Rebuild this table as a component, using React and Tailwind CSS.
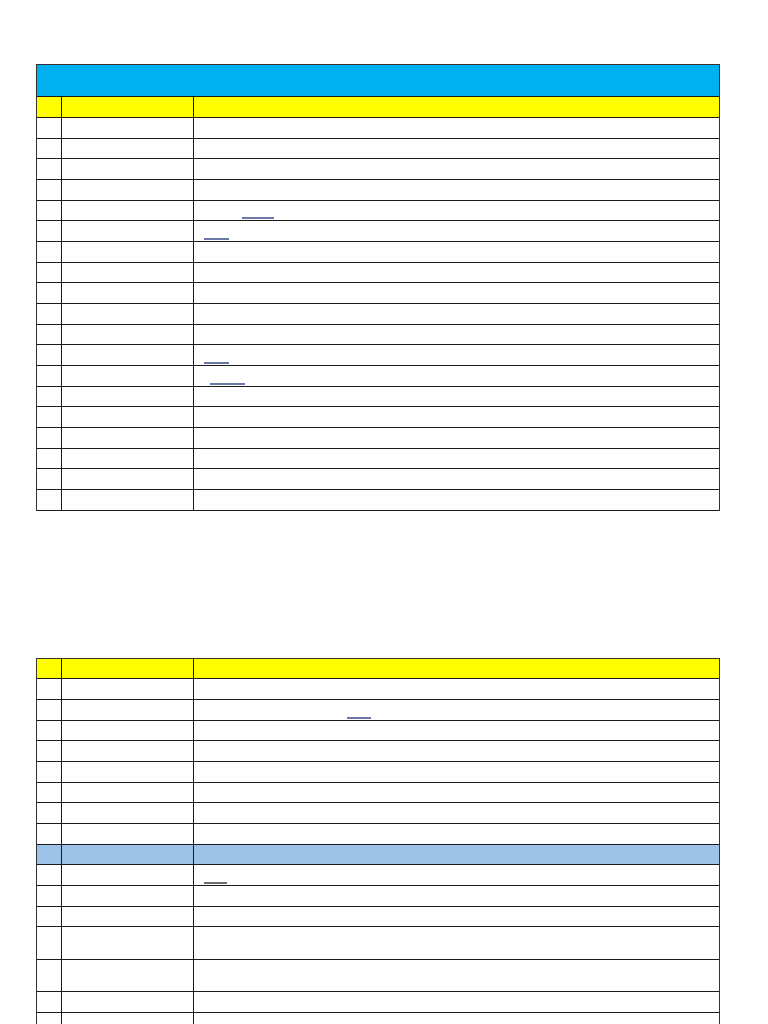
const cell = "border-r border-[#1a1a1a] h-full";

function Row({ h = "h-[20.68px]", bg = "bg-white", mark }) {
  return (
    <div className={`grid grid-cols-[25px_132px_1fr] border-b border-[#1a1a1a] ${h} ${bg}`}>
      <div className={cell} />
      <div className={cell} />
      <div className="h-full flex items-end pb-[1px]">
        {mark && (
          <div
            className={`h-[2px] ${mark.c || "bg-[#6a78a6]"}`}
            style={{ marginLeft: mark.x, width: mark.w }}
          />
        )}
      </div>
    </div>
  );
}

export default function App() {
  const t1 = Array.from({ length: 19 }, () => null);
  t1[4] = { x: 48, w: 32 };
  t1[5] = { x: 10, w: 25 };
  t1[11] = { x: 10, w: 25 };
  t1[12] = { x: 16, w: 35 };

  const t2a = Array.from({ length: 8 }, () => null);
  t2a[1] = { x: 153, w: 24 };

  return (
    <div className="min-h-screen bg-white pt-[64px] pl-[36px] font-['Liberation_Sans',sans-serif]">
      <div className="w-[684px] border-l border-r border-t border-[#333]">
        <div className="h-[32px] bg-[#00b0f0] border-b border-[#1a1a1a]" />
        <Row h="h-[21px]" bg="bg-[#ffff00]" />
        {t1.map((m, i) => (
          <Row key={i} mark={m} />
        ))}
      </div>

      <div className="w-[684px] mt-[147px] border-l border-r border-t border-[#333]">
        <Row h="h-[20.5px]" bg="bg-[#ffff00]" />
        {t2a.map((m, i) => (
          <Row key={i} h="h-[20.7px]" mark={m} />
        ))}
        <Row h="h-[20.3px]" bg="bg-[#9dc3e6]" />
        <Row h="h-[20.8px]" mark={{ x: 10, w: 23, c: "bg-[#6e6e6e]" }} />
        <Row h="h-[20.8px]" />
        <Row h="h-[20.8px]" />
        <Row h="h-[32.5px]" />
        <Row h="h-[32.5px]" />
        <Row h="h-[20.6px]" />
        <Row h="h-[20.6px]" />
      </div>
    </div>
  );
}
